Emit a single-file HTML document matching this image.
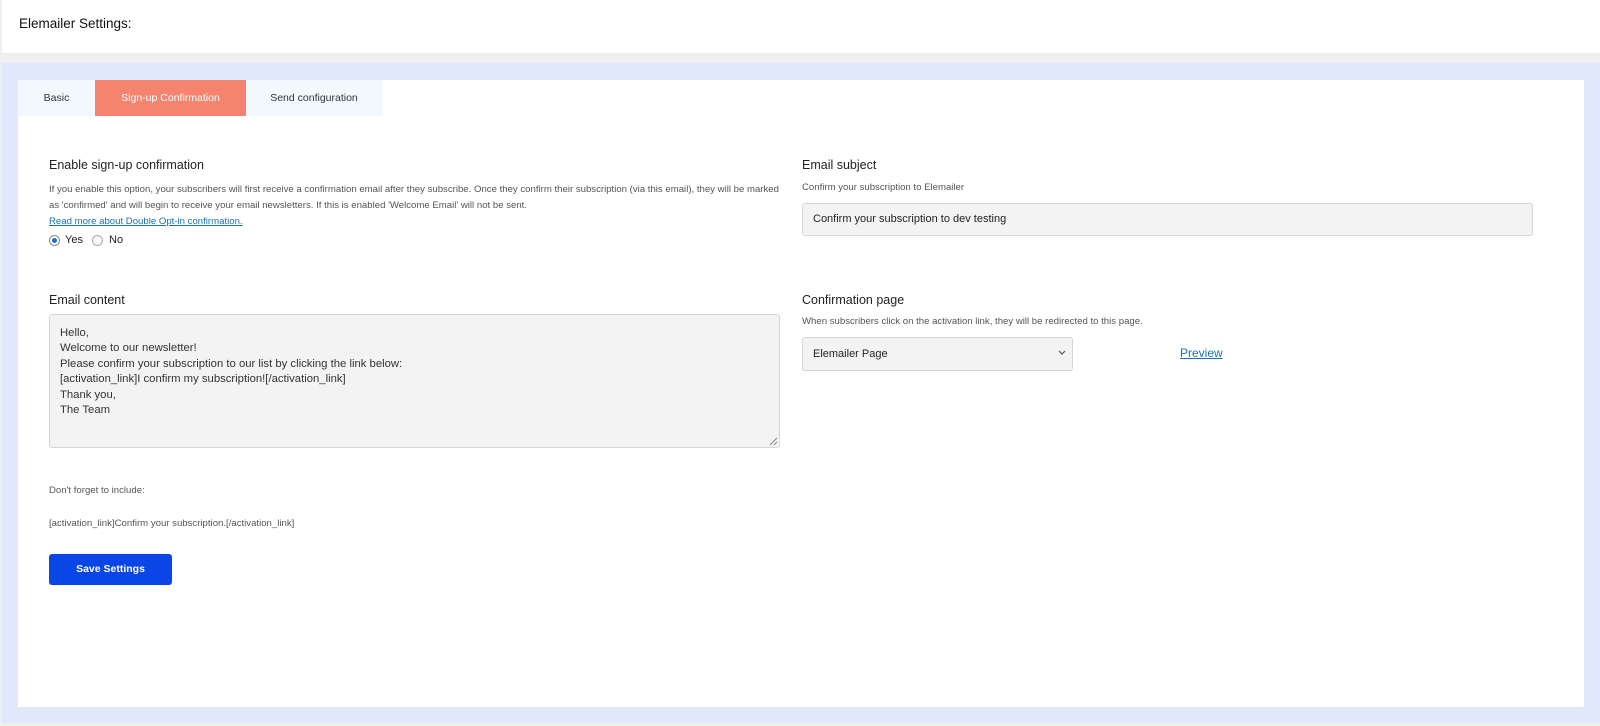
<!DOCTYPE html>
<html><head><meta charset="utf-8"><style>
*{box-sizing:border-box;margin:0;padding:0}
body{width:1600px;height:726px;overflow:hidden;background:#efefef;font-family:"Liberation Sans",sans-serif;position:relative;color:#333}
.abs{position:absolute;white-space:nowrap}
#hdr{left:2px;top:0;width:1598px;height:53px;background:#fff}
#blue{left:2px;top:63px;width:1598px;height:660px;background:#e1e8fc}
#panel{left:18px;top:80px;width:1566px;height:627px;background:#fff}
.tab{top:80px;height:36px;line-height:36px;font-size:10.5px;text-align:center;background:#f3f7fe;color:#333}
h3{font-weight:normal;font-size:12.5px;color:#222}
.d{font-size:9.6px;color:#555}
.box{background:#f3f3f3;border:1px solid #d6d6d6;border-radius:3px}
</style></head><body>
<div class="abs" id="hdr"></div>
<div class="abs" style="left:19px;top:16px;font-size:13.5px;color:#111">Elemailer Settings:</div>
<div class="abs" id="blue"></div>
<div class="abs" id="panel"></div>
<div class="abs tab" style="left:18px;width:77px">Basic</div>
<div class="abs tab" style="left:95px;width:151px;background:#f4846f;color:#fff">Sign-up Confirmation</div>
<div class="abs tab" style="left:246px;width:136px">Send configuration</div>

<h3 class="abs" style="left:49px;top:158px">Enable sign-up confirmation</h3>
<div class="abs d" style="left:49px;top:182px;line-height:16px">If you enable this option, your subscribers will first receive a confirmation email after they subscribe. Once they confirm their subscription (via this email), they will be marked<br>as 'confirmed' and will begin to receive your email newsletters. If this is enabled 'Welcome Email' will not be sent.<br><span style="color:#1a6fb5;text-decoration:underline">Read more about Double Opt-in confirmation.</span></div>
<div class="abs" style="left:49px;top:235px;width:11px;height:11px;border:1px solid #888;border-radius:50%;background:#fff"><div style="position:absolute;left:2px;top:2px;width:5px;height:5px;border-radius:50%;background:#1a6fd0"></div></div>
<div class="abs" style="left:65px;top:234px;font-size:11px;color:#222">Yes</div>
<div class="abs" style="left:92px;top:235px;width:11px;height:11px;border:1px solid #aaa;border-radius:50%;background:#fafafa"></div>
<div class="abs" style="left:109px;top:234px;font-size:11px;color:#222">No</div>

<h3 class="abs" style="left:49px;top:293px">Email content</h3>
<div class="abs box" style="left:49px;top:314px;width:731px;height:134px"></div>
<div class="abs" style="left:60px;top:326px;font-size:11.3px;line-height:15.4px;color:#333">Hello,<br>Welcome to our newsletter!<br>Please confirm your subscription to our list by clicking the link below:<br>[activation_link]I confirm my subscription![/activation_link]<br>Thank you,<br>The Team</div>
<svg class="abs" style="left:768px;top:436px" width="10" height="10"><path d="M9 2L2 9M9 6L6 9" stroke="#888" stroke-width="1"/></svg>
<div class="abs d" style="left:49px;top:485px">Don't forget to include:</div>
<div class="abs d" style="left:49px;top:518px">[activation_link]Confirm your subscription.[/activation_link]</div>
<div class="abs" style="left:49px;top:554px;width:123px;height:31px;background:#0a46e6;border-radius:3px;color:#fff;font-size:10.5px;font-weight:bold;text-align:center;line-height:31px">Save Settings</div>

<h3 class="abs" style="left:802px;top:158px">Email subject</h3>
<div class="abs d" style="left:802px;top:182px">Confirm your subscription to Elemailer</div>
<div class="abs box" style="left:802px;top:203px;width:731px;height:33px"></div>
<div class="abs" style="left:813px;top:213px;font-size:11px;color:#222">Confirm your subscription to dev testing</div>

<h3 class="abs" style="left:802px;top:293px">Confirmation page</h3>
<div class="abs d" style="left:802px;top:316px">When subscribers click on the activation link, they will be redirected to this page.</div>
<div class="abs box" style="left:802px;top:337px;width:271px;height:34px"></div>
<div class="abs" style="left:813px;top:348px;font-size:11px;color:#222">Elemailer Page</div>
<svg class="abs" style="left:1058px;top:350px" width="8" height="6"><path d="M1 1L4 4L7 1" stroke="#555" fill="none" stroke-width="1.2"/></svg>
<div class="abs" style="left:1180px;top:346px;font-size:12px;color:#1a6fb5;text-decoration:underline">Preview</div>
</body></html>
